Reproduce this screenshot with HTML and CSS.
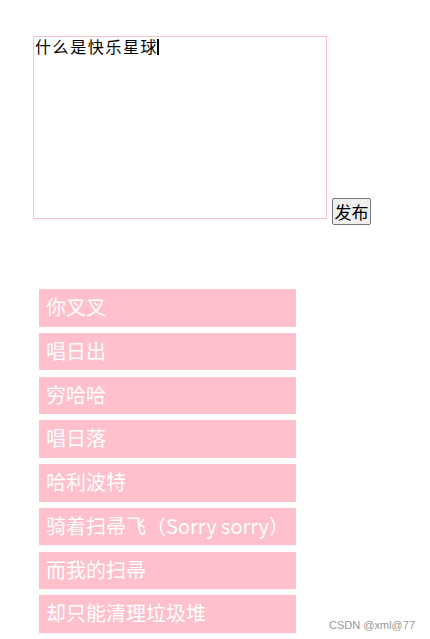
FILE: index.html
```html
<!DOCTYPE html>
<html lang="zh">
<head>
<meta charset="utf-8">
<title>发布</title>
<link rel="stylesheet" href="styles.css">
</head>
<body>
<div class="composer">
  <div class="editor">什么是快乐星球<span class="caret"></span></div>
  <button class="publish">发布</button>
</div>
<ul class="list">
  <li class="item">你叉叉</li>
  <li class="item">唱日出</li>
  <li class="item">穷哈哈</li>
  <li class="item">唱日落</li>
  <li class="item">哈利波特</li>
  <li class="item">骑着扫帚飞（Sorry sorry）</li>
  <li class="item">而我的扫帚</li>
  <li class="item">却只能清理垃圾堆</li>
</ul>
<div class="watermark">CSDN @xml@77</div>
</body>
</html>
```
FILE: styles.css
```css
html, body {
  margin: 0;
  padding: 0;
  background: #fff;
}
body {
  position: relative;
  width: 430px;
  height: 639px;
  overflow: hidden;
  font-family: "Noto Sans CJK SC", sans-serif;
}
.composer {
  display: flex;
  align-items: flex-end;
  padding: 36px 0 0 33px;
  gap: 5px;
}
.editor {
  box-sizing: border-box;
  width: 294px;
  height: 183px;
  margin-bottom: 6px;
  border: 1px solid #ffc0cb;
  padding: 0 1px;
  font-family: "Noto Sans CJK SC", sans-serif;
  font-size: 16px;
  letter-spacing: 1.6px;
  line-height: 19px;
  color: #000;
}
.caret {
  display: inline-block;
  width: 1.5px;
  height: 16px;
  background: #000;
  vertical-align: -2px;
  margin-left: -1px;
}
.publish {
  box-sizing: border-box;
  width: 39px;
  height: 27px;
  padding: 0;
  border: 1px solid #767676;
  border-radius: 2px;
  background: #efefef;
  font-family: "Noto Sans CJK SC", sans-serif;
  font-size: 17px;
  line-height: 25px;
  color: #000;
}
.list {
  list-style: none;
  margin: 0;
  padding: 64px 0 0 39px;
  display: flex;
  flex-direction: column;
  gap: 6.25px;
}
.item {
  width: 257px;
  height: 37.5px;
  box-sizing: border-box;
  padding-left: 7px;
  background: #ffc0cb;
  color: #fff;
  font-size: 20px;
  line-height: 36px;
  white-space: nowrap;
}
.watermark {
  position: absolute;
  right: 15px;
  bottom: 8px;
  font-family: "Liberation Sans", Arial, sans-serif;
  font-size: 11px;
  color: #999;
}
```
